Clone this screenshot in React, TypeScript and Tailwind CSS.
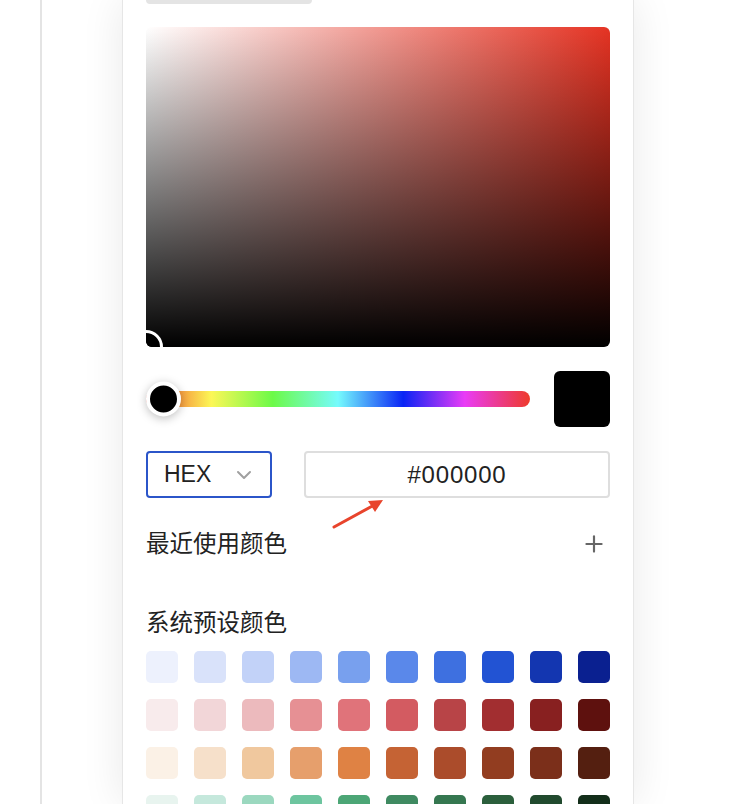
import { Plus, ChevronDown } from "lucide-react";

const presets: string[][] = [
  ["#edf1fd", "#d9e2fa", "#c2d2f8", "#9db8f3", "#78a0ee", "#5a88ea", "#3e70e0", "#2253d3", "#1336b0", "#0a2090"],
  ["#f8ebec", "#f2d6d8", "#ecbabd", "#e69094", "#e0737a", "#d35b61", "#b84447", "#a22e30", "#882020", "#5e110e"],
  ["#fbf1e6", "#f6e0ca", "#f0c89e", "#e69f6c", "#df8244", "#c56334", "#ab4c2b", "#923d20", "#7b2f1a", "#541f10"],
  ["#e8f4ef", "#c5e8dc", "#9bd8bf", "#6dc59f", "#4ca676", "#3f8a61", "#357750", "#2b5f3c", "#214a2e", "#132e1a"],
];

const font = { fontFamily: '"Liberation Sans", "Noto Sans CJK SC", sans-serif' };

export default function App() {
  return (
    <div className="relative flex h-[804px] w-full overflow-hidden bg-white text-[#222]" style={font}>
      <div className="ml-[40px] h-full border-l-2 border-[#e4e4e4]" />

      {/* Picker panel */}
      <div className="ml-[80px] h-full w-[512px] shrink-0 border-x border-[#e6e6e6] bg-white px-[23px] shadow-[0_0_40px_rgba(0,0,0,0.09)]">
        <div className="h-[4px] w-[166px] rounded-b-[4px] bg-[#e4e4e4]" />

        {/* Saturation area */}
        <div className="relative mt-[23px] h-[320px] overflow-hidden rounded-[6px] bg-[linear-gradient(to_top,#000,transparent),linear-gradient(to_right,#fff,#e53323)]">
          <div className="absolute -bottom-[17px] -left-[17px] h-[34px] w-[34px] rounded-full border-[3px] border-white bg-black" />
        </div>

        {/* Hue + preview */}
        <div className="mt-6 flex h-14 items-center gap-6">
          <div className="relative h-4 flex-1 rounded-full bg-[linear-gradient(to_right,#ee3a2a_0%,#fcf756_17%,#6cfa48_33%,#75fbfd_50%,#0a24f5_67%,#e93cf6_83%,#ee3a2a_100%)]">
            <div className="absolute left-0 top-1/2 h-[35px] w-[35px] -translate-y-1/2 rounded-full border-4 border-white bg-black shadow-[0_2px_10px_rgba(0,0,0,0.25)]" />
          </div>
          <div className="h-14 w-14 rounded-[6px] bg-black" />
        </div>

        {/* Format + value */}
        <div className="mt-6 flex h-[47px] gap-8">
          <div className="flex w-[126px] items-center justify-between rounded-[4px] border-2 border-[#2b55c9] pl-4 pr-[14px] text-[23px]">
            <span>HEX</span>
            <ChevronDown className="h-6 w-6 text-[#a0a0a0]" strokeWidth={2} />
          </div>
          <div className="flex flex-1 items-center justify-center rounded-[4px] border-2 border-[#dedede] text-[24px] tracking-[0.8px]">
            #000000
          </div>
        </div>

        <div className="mt-[31px] flex items-center justify-between">
          <span className="text-[23.5px] leading-[30px]">最近使用颜色</span>
          <Plus className="mr-[3px] h-[26px] w-[26px] text-[#666]" strokeWidth={2} />
        </div>

        <div className="mt-[49px] text-[23.5px] leading-[30px]">系统预设颜色</div>

        <div className="mt-[13px] grid grid-cols-10 gap-x-4 gap-y-4">
          {presets.flat().map((c, i) => (
            <div key={i} className="h-8 w-8 rounded-[5px]" style={{ backgroundColor: c }} />
          ))}
        </div>
      </div>

      {/* annotation arrow */}
      <svg className="absolute left-[330px] top-[496px]" width="58" height="36" viewBox="0 0 58 36">
        <line x1="4" y1="31" x2="46" y2="8" stroke="#e8442c" strokeWidth="3" strokeLinecap="round" />
        <polygon points="53,4 38,5 45,16" fill="#e8442c" />
      </svg>
    </div>
  );
}
